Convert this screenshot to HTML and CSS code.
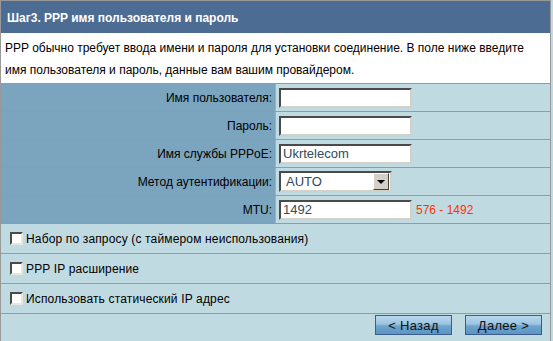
FILE: index.html
```html
<!DOCTYPE html>
<html lang="ru">
<head>
<meta charset="utf-8">
<title>Шаг3. PPP</title>
<link rel="stylesheet" href="styles.css">
</head>
<body>
<div class="panel">
  <div class="head">Шаг3. PPP имя пользователя и пароль</div>
  <div class="desc">PPP обычно требует ввода имени и пароля для установки соединение. В поле ниже введите<br>имя пользователя и пароль, данные вам вашим провайдером.</div>
  <div class="frow">
    <div class="lbl">Имя пользователя:</div>
    <div class="val"><input class="txt" type="text"></div>
  </div>
  <div class="frow">
    <div class="lbl">Пароль:</div>
    <div class="val"><input class="txt" type="password"></div>
  </div>
  <div class="frow">
    <div class="lbl">Имя службы PPPoE:</div>
    <div class="val"><input class="txt" type="text" value="Ukrtelecom"></div>
  </div>
  <div class="frow">
    <div class="lbl">Метод аутентификации:</div>
    <div class="val">
      <span class="sel">
        <span class="sel-text">AUTO</span>
        <span class="sel-btn"><span class="tri"></span></span>
      </span>
    </div>
  </div>
  <div class="frow">
    <div class="lbl">MTU:</div>
    <div class="val"><input class="txt" type="text" value="1492"><span class="range">576 - 1492</span></div>
  </div>
  <div class="crow"><label class="cl"><input class="chk" type="checkbox">Набор по запросу (с таймером неиспользования)</label></div>
  <div class="crow"><label class="cl"><input class="chk" type="checkbox">PPP IP расширение</label></div>
  <div class="crow"><label class="cl"><input class="chk" type="checkbox">Использовать статический IP адрес</label></div>
  <div class="actions">
    <button class="btn" type="button">&lt; Назад</button>
    <button class="btn" type="button">Далее &gt;</button>
  </div>
</div>
</body>
</html>
```
FILE: styles.css
```css
html, body {
  margin: 0;
  padding: 0;
  background: #c0dae2;
}
body {
  font-family: "Liberation Sans", Arial, sans-serif;
  font-size: 12px;
  color: #000;
}
.panel {
  width: 551px;
  box-sizing: border-box;
  border: 1px solid #999;
  border-bottom: none;
  background: #c0dae2;
}
.head {
  height: 32px;
  line-height: 34px;
  padding-left: 6px;
  background: #4c6c94;
  color: #fff;
  font-weight: bold;
  font-size: 12px;
}
.desc {
  background: #fff;
  padding: 4px 4px 2px;
  line-height: 22px;
  border-bottom: 1px solid #999;
}
.frow {
  display: flex;
  height: 27px;
  border-bottom: 1px solid #999;
}
.lbl {
  width: 275px;
  box-sizing: border-box;
  background: #7ba4be;
  border-right: 1px solid #9db0bb;
  text-align: right;
  padding-right: 3px;
  line-height: 28px;
}
.val {
  flex: 1;
  display: flex;
  align-items: center;
  padding-left: 3px;
  background: #c0dae2;
}
.txt {
  width: 133px;
  height: 20px;
  box-sizing: border-box;
  margin: 0;
  padding: 0 2px;
  border-style: solid;
  border-width: 2px;
  border-color: #4a4a4a #d4d0c8 #d4d0c8 #4a4a4a;
  background: #fff;
  font-family: "Liberation Sans", Arial, sans-serif;
  font-size: 13px;
  color: #2f4a5a;
  outline: none;
}
.range {
  margin-left: 4px;
  color: #ff3300;
  font-size: 12px;
}
.sel {
  position: relative;
  display: inline-flex;
  align-items: center;
  width: 113px;
  height: 21px;
  box-sizing: border-box;
  border-style: solid;
  border-width: 2px;
  border-color: #4a4a4a #d4d0c8 #d4d0c8 #4a4a4a;
  background: #fff;
}
.sel-text {
  padding-left: 5px;
  font-size: 13px;
  color: #2f4a5a;
}
.sel-btn {
  position: absolute;
  right: 1px;
  top: 0;
  width: 16px;
  height: 17px;
  box-sizing: border-box;
  background: #d4d0c8;
  border-style: solid;
  border-width: 1px;
  border-color: #fff #404040 #404040 #fff;
  display: flex;
  align-items: center;
  justify-content: center;
}
.tri {
  width: 0;
  height: 0;
  border-left: 4px solid transparent;
  border-right: 4px solid transparent;
  border-top: 4px solid #000;
}
.crow {
  height: 29px;
  border-bottom: 1px solid #999;
  display: flex;
  align-items: center;
  padding-left: 9px;
  letter-spacing: 0.15px;
}
.cl {
  display: flex;
  align-items: center;
}
.chk {
  appearance: none;
  -webkit-appearance: none;
  width: 13px;
  height: 13px;
  margin: 0 3px 0 0;
  box-sizing: border-box;
  background: #fff;
  border-style: solid;
  border-width: 2px;
  border-color: #4a4a4a #e8e6e0 #e8e6e0 #4a4a4a;
}
.actions {
  height: 40px;
  display: flex;
  justify-content: flex-end;
  align-items: flex-start;
  gap: 13px;
  padding: 1px 8px 0 0;
}
.btn {
  width: 77px;
  height: 20px;
  margin: 0;
  padding: 0;
  border: 1px solid #3b5c8c;
  background: linear-gradient(#b8d8ee 0%, #9cc4e0 45%, #6fa5cd 55%, #5b95c2 100%);
  font-family: "Liberation Sans", Arial, sans-serif;
  font-size: 13px;
  color: #111;
  letter-spacing: 0.3px;
}
```
